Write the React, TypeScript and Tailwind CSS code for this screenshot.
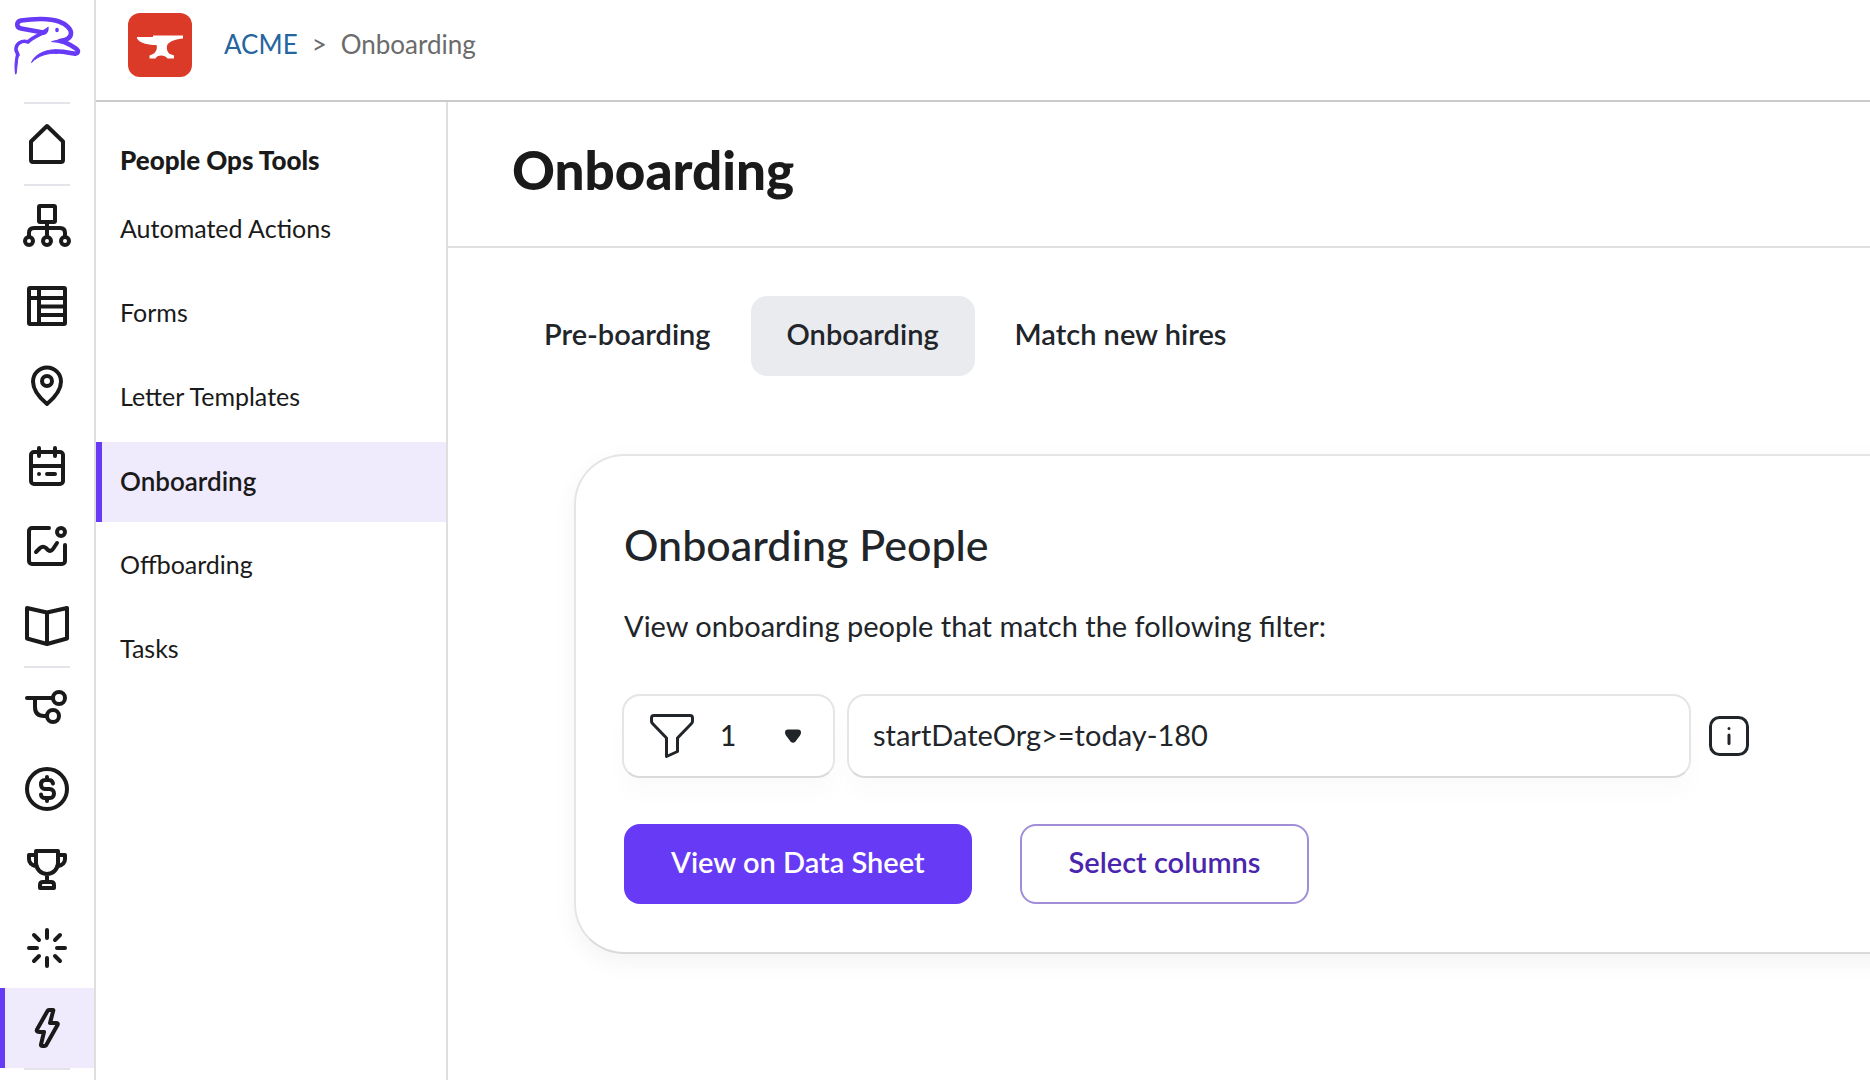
import type { ReactNode } from "react";

function Icon({ children, className = "size-12" }: { children: ReactNode; className?: string }) {
  return (
    <svg
      viewBox="0 0 48 48"
      className={className}
      fill="none"
      stroke="currentColor"
      strokeWidth="4"
      strokeLinecap="round"
      strokeLinejoin="round"
      aria-hidden="true"
    >
      {children}
    </svg>
  );
}

const icons = {
  home: <path d="M8 21.5 24 6l16 15.500V40a2 2 0 0 1-2 2H10a2 2 0 0 1-2-2Z" />,
  org: (
    <>
      <rect x="16" y="4" width="16" height="16" rx="1" />
      <path d="M24 20v13M6 34v-3q0-5 5-5h26q5 0 5 5v3" />
      <circle cx="6" cy="39" r="4" />
      <circle cx="24" cy="39" r="4" />
      <circle cx="42" cy="39" r="4" />
    </>
  ),
  table: (
    <>
      <rect x="6" y="6" width="36" height="36" rx="1" />
      <path d="M6 16h36M16 6v36M16 24.500h26M16 33h26" />
    </>
  ),
  pin: (
    <>
      <path d="M24 42C18 37 10 28 10 19.500a14 14 0 0 1 28 0C38 28 30 37 24 42Z" />
      <circle cx="24" cy="19" r="5" />
    </>
  ),
  calendar: (
    <>
      <rect x="8" y="10" width="32" height="32" rx="3" />
      <path d="M8 24h32M16 6v8M32 6v8M24 32h8M16 32h.01" />
    </>
  ),
  chart: (
    <>
      <path d="M26 6H9a3 3 0 0 0-3 3v30a3 3 0 0 0 3 3h30a3 3 0 0 0 3-3V23" />
      <circle cx="38" cy="10" r="4" />
      <path d="m13 30 4-4q3-2.500 6 0l2 2q3 2 5-1l4-6" />
    </>
  ),
  book: <path d="m4 6 20 4.500L44 6v30.500L24 42 4 36.500ZM24 10.500V42" />,
  flow: (
    <>
      <path d="M4 14h26M12 14v9q0 9 9 9h2" />
      <circle cx="36" cy="14" r="6" />
      <circle cx="30" cy="32" r="6" />
    </>
  ),
  dollar: (
    <>
      <circle cx="24" cy="25" r="20" />
      <path d="M30 19.500c-.5-2-2-3.500-4-3.500h-4c-3 0-4 2-4 4.500s1.500 4.500 4 4.500h4.500c3 0 4.500 2 4.500 4.500S29.500 34 27 34h-5c-2.500 0-4-1.500-4-3.500M24 13v2.500M24 34.500V37" />
    </>
  ),
  trophy: (
    <>
      <path d="M13 7h22v12a11 11 0 0 1-22 0ZM24 30v7M13 11H6v4q0 6 8 7.500M35 11h7v4q0 6-8 7.500M17 44v-3q0-3 3-3h8q3 0 3 3v3Z" />
    </>
  ),
  loader: (
    <path d="M24 6v8M24 34v8M6 24h8M34 24h8M11 11l5 5M32 32l5 5M37 11l-5 5M16 32l-5 5" />
  ),
  bolt: <path d="M26 6h4q.5 0 .3.600L27 19h6q2.500 0 1.500 2L23.500 40.500Q23 42 22 42h-2.500q-1.800 0-1.500-1.500L21 28h-5q-3 0-2-2.500L24.500 7Q25 6 26 6Z" />,
};

type RailItem = { name: string; icon: ReactNode; active?: boolean };

const railGroups: RailItem[][] = [
  [{ name: "Home", icon: icons.home }],
  [
    { name: "Org chart", icon: icons.org },
    { name: "Data sheet", icon: icons.table },
    { name: "Map", icon: icons.pin },
    { name: "Calendar", icon: icons.calendar },
    { name: "Reports", icon: icons.chart },
    { name: "Handbook", icon: icons.book },
  ],
  [
    { name: "Workflows", icon: icons.flow },
    { name: "Compensation", icon: icons.dollar },
    { name: "Performance", icon: icons.trophy },
    { name: "Surveys", icon: icons.loader },
    { name: "People Ops", icon: icons.bolt, active: true },
  ],
];

function Divider() {
  return <div className="mx-6 h-0.5 shrink-0 bg-[#e4e3ea]" />;
}

function Logo() {
  return (
    <svg viewBox="0 0 70 64" className="h-16 w-[70px]" fill="none" stroke="#673af6" strokeLinecap="round" strokeLinejoin="round" aria-hidden="true">
      <path
        strokeWidth="4.600"
        d="M31 18.500 9 14.500C4 13.500 4 7.500 9 6.500C21 4.500 38 4 47 7.500C54 10 59 15 59 19C59 23 56 26 48 27C56 28.500 60 32 64.500 35C67 37 66 40.500 62 39.500C57 39 52 37 44 37.500"
      />
      <path strokeWidth="3.600" d="M32 18.500C26 21.500 20 24 16 28C10 25.500 3.500 30 4 36L6 41" />
      <path fill="#673af6" strokeWidth="1" d="M3.500 35 6.500 41C5 48 5 55 4 60H3.500C2.500 53 3 46 4.500 40Z" />
      <path fill="#673af6" strokeWidth="1" d="M44 35.800C34 35.500 23 40 19.500 48.500C27 41 36 39 45 39.300Z" />
      <path fill="#673af6" strokeWidth="1" d="M36 13.500 32 16 26 19C33 22.500 37 19 36 13.500ZM40 27.500 53 24.500 51 28.500Z" />
      <ellipse cx="45" cy="16" rx="1.800" ry="2.300" fill="#673af6" stroke="none" />
    </svg>
  );
}

function Rail() {
  return (
    <nav aria-label="Main" className="flex w-24 shrink-0 flex-col border-r-2 border-[#dfdfdf] text-[#1a1a1a]">
      <a href="#" aria-label="Dashboard" className="flex h-[102px] shrink-0 pt-3.5 pl-3">
        <Logo />
      </a>
      <Divider />
      {railGroups.map((group) => (
        <div key={group[0].name} className="flex shrink-0 flex-col">
          {group.map((item) => (
            <a
              key={item.name}
              href="#"
              aria-label={item.name}
              className={
                item.active
                  ? "flex h-20 items-center justify-center border-l-[5px] border-[#673af6] bg-[#efebfd] pr-[5px]"
                  : "flex h-20 items-center justify-center"
              }
            >
              <Icon>{item.icon}</Icon>
            </a>
          ))}
          <Divider />
        </div>
      ))}
    </nav>
  );
}

const tools = ["Automated Actions", "Forms", "Letter Templates", "Onboarding", "Offboarding", "Tasks"];

function ToolsNav() {
  return (
    <nav aria-label="People Ops Tools" className="w-[352px] shrink-0 border-r-2 border-[#dfdfdf] pt-[38px] text-[25px] text-[#1a1a1a]">
      <h2 className="pl-6 text-[26px] leading-10 font-black">People Ops Tools</h2>
      <ul className="mt-2.5 flex flex-col gap-1">
        {tools.map((tool) => (
          <li key={tool}>
            <a
              href="#"
              className={
                tool === "Onboarding"
                  ? "flex h-20 items-center border-l-[6px] border-[#673af6] bg-[#efebfd] pb-0.5 pl-[18px] text-[26px] font-semibold"
                  : "flex h-20 items-center pb-0.5 pl-6"
              }
            >
              {tool}
            </a>
          </li>
        ))}
      </ul>
    </nav>
  );
}

const tabs = ["Pre-boarding", "Onboarding", "Match new hires"];

export default function App() {
  return (
    <div className="flex h-screen overflow-hidden bg-white font-['Lato',sans-serif]">
      <Rail />
      <div className="flex min-w-0 flex-1 flex-col">
        <header className="flex h-[102px] shrink-0 items-start border-b-2 border-[#cacaca] pt-[13px] pl-8">
          <div className="flex size-16 items-center justify-center rounded-xl bg-[#db3a28] pt-1">
            <svg viewBox="0 0 48 24" className="h-6 w-12" fill="#fff" aria-hidden="true">
              <path d="M1 2h16V.5h30v3C40 4 34 6 31.500 9.500C30 13 31 17 34 19l4 1.500v3h-6.500C29 19.500 21 19.500 19.500 23.500H13.500v-3L17 19C20.500 17 21.500 13 20.500 10C13 10 4 8.500 1 3.500Z" />
            </svg>
          </div>
          <nav aria-label="Breadcrumb" className="flex h-16 items-center gap-3.5 pb-0.5 pl-8 text-[26px] text-[#6b6b6b]">
            <a href="#" className="text-[#2565a0]">ACME</a>
            <span>&gt;</span>
            <span>Onboarding</span>
          </nav>
        </header>
        <div className="flex min-h-0 flex-1">
          <ToolsNav />
          <main className="min-w-0 flex-1 overflow-hidden">
            <div className="flex h-[146px] items-center border-b-2 border-[#dfdfdf] pb-2 pl-16">
              <h1 className="text-[53px] font-black text-[#1a1a1a]">Onboarding</h1>
            </div>
            <div role="tablist" className="flex gap-2 pt-12 pl-16 text-[29px] font-semibold text-[#212529]">
              {tabs.map((tab) => (
                <button
                  key={tab}
                  role="tab"
                  aria-selected={tab === "Onboarding"}
                  className={
                    tab === "Onboarding"
                      ? "h-20 min-w-56 rounded-2xl bg-[#eaebef] px-8 pb-1"
                      : "h-20 min-w-56 rounded-2xl px-8 pb-1"
                  }
                >
                  {tab}
                </button>
              ))}
            </div>
            <section className="mt-[78px] -mr-12 ml-[126px] rounded-l-[50px] border-2 border-r-0 border-[#e5e5e5] border-b-[#dadada] pt-[60px] pb-12 pl-12 text-[#212529] shadow-[0_8px_24px_rgba(0,0,0,0.05)]">
              <h2 className="text-[43px] leading-[58px] font-medium">Onboarding People</h2>
              <p className="mt-8 text-[29px] leading-10">View onboarding people that match the following filter:</p>
              <div className="mt-12 flex items-center pr-[169px]">
                <button
                  aria-label="Filters, 1 active"
                  className="-ml-0.5 flex h-[84px] w-[213px] items-center rounded-[18px] border-2 border-[#e5e5e5] border-b-[#dadada] pl-[26px] text-[28px] font-medium shadow-[0_16px_24px_rgba(0,0,0,0.02)]"
                >
                  <svg viewBox="0 0 44 44" className="size-11" fill="none" stroke="currentColor" strokeWidth="3" strokeLinejoin="round" aria-hidden="true">
                    <path d="M4 1.500h36q2.500 0 2.500 2.500v3q0 1.500-1 2.500L27.500 24v13.500l-11 5V24L2.500 9.500q-1-1-1-2.500V4q0-2.500 2.500-2.500Z" />
                  </svg>
                  <span className="ml-[26px] pb-0.5">1</span>
                  <svg viewBox="0 0 16 14" className="ml-[49px] h-3.5 w-4" fill="currentColor" aria-hidden="true">
                    <path d="M3 .5h10q3 0 3 3 0 1.500-1 3l-4.500 6q-2.500 2.500-5 0L1 6.500Q0 5 0 3.500 0 .5 3 .5Z" />
                  </svg>
                </button>
                <input
                  aria-label="Filter query"
                  defaultValue="startDateOrg>=today-180"
                  className="ml-3 h-[84px] min-w-0 flex-1 rounded-[18px] border-2 border-[#e5e5e5] border-b-[#dadada] px-6 pb-1 text-[29px] shadow-[0_16px_24px_rgba(0,0,0,0.02)] outline-none"
                />
                <button aria-label="Filter help" className="ml-[18px]">
                  <svg viewBox="0 0 40 40" className="size-10" fill="none" stroke="currentColor" strokeWidth="3" strokeLinecap="round" aria-hidden="true">
                    <rect x="1.500" y="1.500" width="37" height="37" rx="9" />
                    <path d="M20 19v8.500M20 12.500v.01" />
                  </svg>
                </button>
              </div>
              <div className="mt-[46px] flex gap-12 text-[29px] font-semibold">
                <button className="h-20 rounded-2xl bg-[#673af6] px-[47px] pb-1 text-white">View on Data Sheet</button>
                <button className="h-20 rounded-2xl border-2 border-[#a08fd8] px-[47px] pb-1 text-[#4a25ad]">Select columns</button>
              </div>
            </section>
          </main>
        </div>
      </div>
    </div>
  );
}
